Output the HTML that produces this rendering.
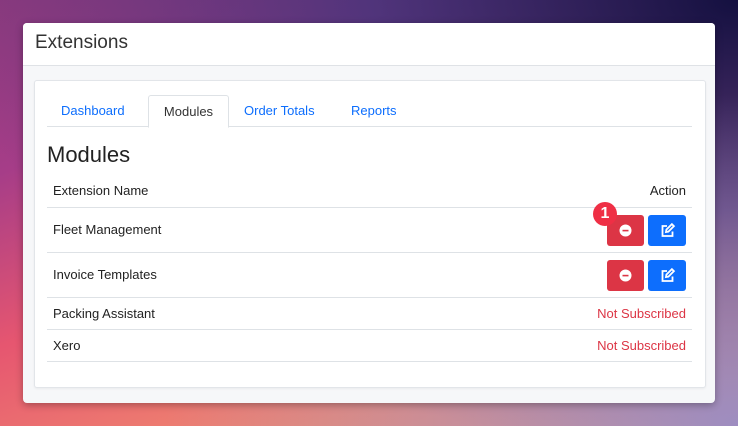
<!DOCTYPE html>
<html><head><style>
*{box-sizing:border-box;margin:0;padding:0}
body{width:738px;height:426px;overflow:hidden;font-family:"Liberation Sans",sans-serif;position:relative;
background:linear-gradient(160deg,#8e3a7e 0%,#a63d88 25%,#e65670 50%,#f08a70 78%,#f5a07a 100%);}
.ov{position:absolute;inset:0;background:radial-gradient(ellipse at 100% 0%,#141040 0%,rgba(60,50,120,.8) 35%,rgba(120,100,180,0) 75%);}
.ov2{position:absolute;inset:0;background:radial-gradient(ellipse at 100% 100%,rgba(150,140,200,.9) 0%,rgba(150,140,200,0) 55%);}
.card{position:absolute;left:23px;top:23px;width:692px;height:380px;background:#f6f7f9;border-radius:4px;box-shadow:0 2px 8px rgba(0,0,0,.3);overflow:hidden}
.hd{height:43px;background:#fff;border-bottom:1px solid #dfe2e6;font-size:19px;color:#333;padding:9px 12px}
.in{position:absolute;left:11px;top:57px;width:672px;height:308px;background:#fff;border:1px solid #e2e5e9;border-radius:3px;box-shadow:0 1px 2px rgba(0,0,0,.05)}
.tabs{position:absolute;left:12px;top:14px;width:645px;height:32px;border-bottom:1px solid #dee2e6}
.tab{position:absolute;top:0;height:32px;font-size:13px;color:#0d6efd;padding-top:8px}
.act{background:#fff;border:1px solid #dee2e6;border-bottom-color:#fff;border-radius:3px 3px 0 0;color:#333;height:33px;text-align:center}
h2{position:absolute;left:12px;top:61px;font-size:22px;font-weight:normal;color:#222}
.row{position:absolute;left:12px;width:645px;border-bottom:1px solid #dee2e6;font-size:13px;color:#222}
.row .n{position:absolute;left:6px}
.row .r{position:absolute;right:6px}
.ns{color:#dc3545}
.b{position:absolute;width:37px;height:31px;border-radius:3px}
.red{background:#dc3545}.blue{background:#0d6efd;width:38px}
.badge{position:absolute;left:-14px;top:-13px;width:24px;height:24px;border-radius:50%;background:#ef2f45;color:#fff;font-weight:bold;font-size:16px;text-align:center;line-height:24px}
</style></head><body>
<div class="ov"></div><div class="ov2"></div>
<div class="card">
<div class="hd">Extensions</div>
<div class="in">
<div class="tabs">
<div class="tab" style="left:14px">Dashboard</div>
<div class="tab act" style="left:101px;width:81px">Modules</div>
<div class="tab" style="left:197px">Order Totals</div>
<div class="tab" style="left:304px">Reports</div>
</div>
<h2>Modules</h2>
<div class="row" style="top:100px;height:27px"><span class="n" style="top:2px">Extension Name</span><span class="r" style="top:2px">Action</span></div>
<div class="row" style="top:127px;height:45px"><span class="n" style="top:14px">Fleet Management</span>
<div class="b red" style="left:560px;top:7px"><svg width="37" height="31"><circle cx="18.5" cy="15.5" r="6" fill="#fff"/><rect x="15.5" y="14.8" width="6" height="1.6" fill="#dc3545"/></svg><div class="badge">1</div></div>
<div class="b blue" style="left:601px;top:7px"><svg width="38" height="31" fill="none" stroke="#fff" stroke-width="1.8"><path d="M19 11h-4.5v10h10v-4.5"/><path d="M18 17l0.4-2.4 5.5-5.5 2 2-5.5 5.5z"/></svg></div></div>
<div class="row" style="top:172px;height:45px"><span class="n" style="top:14px">Invoice Templates</span>
<div class="b red" style="left:560px;top:7px"><svg width="37" height="31"><circle cx="18.5" cy="15.5" r="6" fill="#fff"/><rect x="15.5" y="14.8" width="6" height="1.6" fill="#dc3545"/></svg></div>
<div class="b blue" style="left:601px;top:7px"><svg width="38" height="31" fill="none" stroke="#fff" stroke-width="1.8"><path d="M19 11h-4.5v10h10v-4.5"/><path d="M18 17l0.4-2.4 5.5-5.5 2 2-5.5 5.5z"/></svg></div></div>
<div class="row" style="top:217px;height:32px"><span class="n" style="top:8px">Packing Assistant</span><span class="r ns" style="top:8px">Not Subscribed</span></div>
<div class="row" style="top:249px;height:32px"><span class="n" style="top:8px">Xero</span><span class="r ns" style="top:8px">Not Subscribed</span></div>
</div></div>
</body></html>
